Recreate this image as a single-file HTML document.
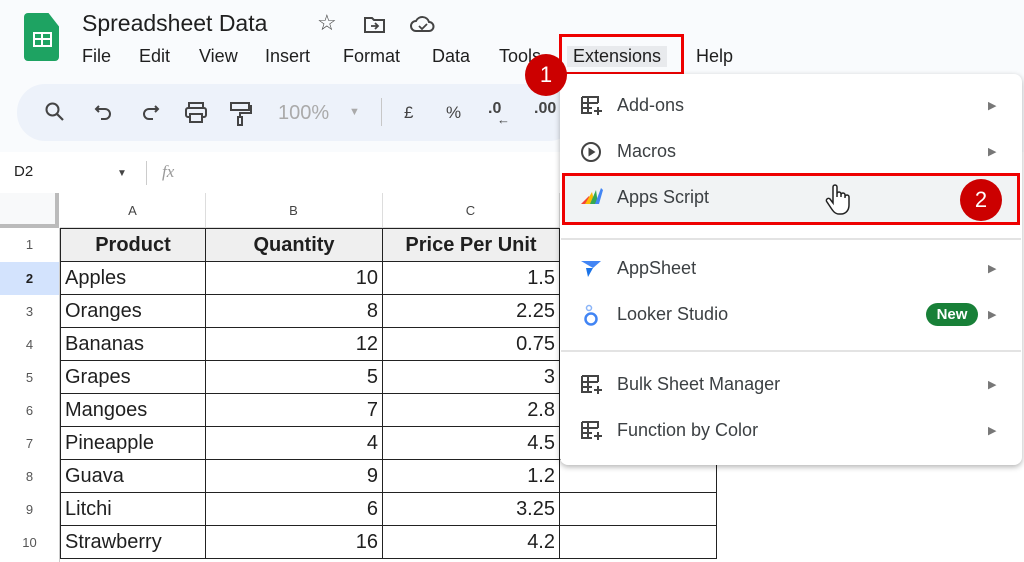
<!DOCTYPE html>
<html><head><style>
*{margin:0;padding:0;box-sizing:border-box}
body{width:1024px;height:562px;overflow:hidden;background:#f9fbfd;font-family:"Liberation Sans",Arial,sans-serif;position:relative;color:#1f1f1f}
.a{position:absolute}
td{border:1px solid #222;font-size:20px;height:33px;padding:0 4px;white-space:nowrap}
.rh{position:absolute;left:0;width:59px;text-align:center;font-size:13px;color:#555}
.it{position:absolute;left:617px;font-size:18px;color:#3c4043}
.ar{position:absolute;left:988px;font-size:11px;color:#777}
.ic{position:absolute;left:580px}
</style></head><body>
<div class="a" style="left:24px;top:13px;width:35px;height:48px;background:#1ea362;border-radius:4px;clip-path:polygon(0 0,70% 0,100% 28%,100% 100%,0 100%)"></div>
<div class="a" style="left:33px;top:32px;width:19px;height:15px;border:2px solid #fff;background:#1ea362"></div>
<div class="a" style="left:33px;top:38px;width:19px;height:2px;background:#fff"></div>
<div class="a" style="left:41px;top:32px;width:2px;height:15px;background:#fff"></div>
<div class="a" style="left:82px;top:10px;font-size:23px;color:#1f1f1f">Spreadsheet Data</div>
<div class="a" style="left:317px;top:10px;font-size:22px;color:#444">☆</div>
<svg class="a" style="left:363px;top:15px" width="24" height="20"><path d="M2 3h7l2 2h10v12H2z" fill="none" stroke="#444" stroke-width="2"/><path d="M8 11h7M12 8l3 3-3 3" fill="none" stroke="#444" stroke-width="1.8"/></svg>
<svg class="a" style="left:409px;top:14px" width="28" height="20"><path d="M7 17a5 5 0 0 1 0-10 7 7 0 0 1 13 1 4.5 4.5 0 0 1 0 9z" fill="none" stroke="#444" stroke-width="2"/><path d="M10 12l3 3 5-5" fill="none" stroke="#444" stroke-width="1.8"/></svg>
<div class="a" style="left:82px;top:46px;font-size:18px;color:#1f1f1f">
<span style="position:absolute;left:0">File</span><span style="position:absolute;left:57px">Edit</span><span style="position:absolute;left:117px">View</span><span style="position:absolute;left:183px">Insert</span><span style="position:absolute;left:261px">Format</span><span style="position:absolute;left:350px">Data</span><span style="position:absolute;left:417px">Tools</span><span style="position:absolute;left:485px;background:#e8eaed;padding:0 6px">Extensions</span><span style="position:absolute;left:614px">Help</span></div>
<div class="a" style="left:559px;top:34px;width:125px;height:41px;border:3px solid #e00;"></div>
<div class="a" style="left:17px;top:84px;width:560px;height:57px;background:#edf2fa;border-radius:28px"></div>
<svg class="a" style="left:44px;top:101px" width="22" height="22"><circle cx="8.5" cy="8.5" r="6" fill="none" stroke="#444" stroke-width="2"/><path d="M13 13l6 6" stroke="#444" stroke-width="2.2"/></svg>
<svg class="a" style="left:94px;top:104px" width="20" height="18"><path d="M5 2L2 5l3 3M2 5h9a5 5 0 0 1 0 10H7" fill="none" stroke="#444" stroke-width="2"/></svg>
<svg class="a" style="left:140px;top:104px" width="20" height="18"><path d="M15 2l3 3-3 3M18 5H9a5 5 0 0 0 0 10h4" fill="none" stroke="#444" stroke-width="2"/></svg>
<svg class="a" style="left:184px;top:102px" width="24" height="22"><rect x="5" y="1" width="14" height="5" fill="none" stroke="#444" stroke-width="2"/><rect x="2" y="6" width="20" height="9" rx="2" fill="none" stroke="#444" stroke-width="2"/><rect x="6" y="12" width="12" height="8" fill="#edf2fa" stroke="#444" stroke-width="2"/></svg>
<svg class="a" style="left:229px;top:101px" width="24" height="26"><rect x="2" y="2" width="18" height="7" fill="none" stroke="#444" stroke-width="2"/><path d="M20 5h2v7H11v4" fill="none" stroke="#444" stroke-width="2"/><rect x="9" y="16" width="4" height="8" fill="none" stroke="#444" stroke-width="2"/></svg>
<div class="a" style="left:278px;top:102px;font-size:20px;color:#aaa">100%</div>
<div class="a" style="left:349px;top:106px;font-size:11px;color:#aaa">▼</div>
<div class="a" style="left:381px;top:98px;width:1px;height:28px;background:#c7c7c7"></div>
<div class="a" style="left:404px;top:103px;font-size:17px;color:#444">£</div>
<div class="a" style="left:446px;top:103px;font-size:17px;color:#444">%</div>
<div class="a" style="left:488px;top:100px;font-size:16px;color:#444;font-weight:bold">.0</div>
<div class="a" style="left:497px;top:112px;font-size:13px;color:#444">←</div>
<div class="a" style="left:534px;top:100px;font-size:16px;color:#444;font-weight:bold">.00</div>
<div class="a" style="left:0;top:152px;width:1024px;height:41px;background:#fff"></div>
<div class="a" style="left:14px;top:163px;font-size:15px">D2</div>
<div class="a" style="left:117px;top:168px;font-size:10px;color:#444">▼</div>
<div class="a" style="left:146px;top:161px;width:1px;height:24px;background:#ccc"></div>
<div class="a" style="left:162px;top:162px;font-size:17px;font-style:italic;font-family:'Liberation Serif',serif;color:#999">fx</div>
<div class="a" style="left:0;top:193px;width:1024px;height:369px;background:#fff"></div>
<div class="a" style="left:0;top:193px;width:59px;height:35px;background:#f8f9fa;border-right:4px solid #bbb;border-bottom:4px solid #bbb"></div>
<div class="a" style="left:60px;top:193px;width:660px;height:35px;border-bottom:1px solid #ddd"></div>
<div class="a" style="left:60px;top:203px;width:145px;text-align:center;font-size:13px;color:#444">A</div>
<div class="a" style="left:205px;top:193px;width:1px;height:35px;background:#ddd"></div>
<div class="a" style="left:205px;top:203px;width:177px;text-align:center;font-size:13px;color:#444">B</div>
<div class="a" style="left:382px;top:193px;width:1px;height:35px;background:#ddd"></div>
<div class="a" style="left:382px;top:203px;width:177px;text-align:center;font-size:13px;color:#444">C</div>
<div class="a" style="left:559px;top:193px;width:1px;height:35px;background:#ddd"></div>
<div class="a" style="left:59px;top:228px;width:1px;height:334px;background:#ccc"></div>
<div class="rh" style="top:237px">1</div>
<div class="a" style="left:0;top:262px;width:59px;height:33px;background:#d3e3fd"></div>
<div class="rh" style="top:271px;font-weight:bold;color:#1f1f1f">2</div>
<div class="rh" style="top:304px">3</div><div class="rh" style="top:337px">4</div><div class="rh" style="top:370px">5</div><div class="rh" style="top:403px">6</div><div class="rh" style="top:436px">7</div><div class="rh" style="top:469px">8</div><div class="rh" style="top:502px">9</div><div class="rh" style="top:535px">10</div>
<table class="a" style="left:60px;top:228px;border-collapse:collapse">
<tr style="background:#efefef"><td style="width:145px;text-align:center;font-weight:bold">Product</td><td style="width:177px;text-align:center;font-weight:bold">Quantity</td><td style="width:177px;text-align:center;font-weight:bold">Price Per Unit</td><td style="width:157px"></td></tr>
<tr><td>Apples</td><td align="right">10</td><td align="right">1.5</td><td></td></tr>
<tr><td>Oranges</td><td align="right">8</td><td align="right">2.25</td><td></td></tr>
<tr><td>Bananas</td><td align="right">12</td><td align="right">0.75</td><td></td></tr>
<tr><td>Grapes</td><td align="right">5</td><td align="right">3</td><td></td></tr>
<tr><td>Mangoes</td><td align="right">7</td><td align="right">2.8</td><td></td></tr>
<tr><td>Pineapple</td><td align="right">4</td><td align="right">4.5</td><td></td></tr>
<tr><td>Guava</td><td align="right">9</td><td align="right">1.2</td><td></td></tr>
<tr><td>Litchi</td><td align="right">6</td><td align="right">3.25</td><td></td></tr>
<tr><td>Strawberry</td><td align="right">16</td><td align="right">4.2</td><td></td></tr>
</table>
<div class="a" style="left:560px;top:74px;width:462px;height:391px;background:#fff;border-radius:8px;box-shadow:0 2px 6px rgba(0,0,0,.3)"></div>
<div class="a" style="left:562px;top:175px;width:456px;height:48px;background:#f1f3f4"></div>
<div class="a" style="left:562px;top:173px;width:458px;height:52px;border:3px solid #e00"></div>
<div class="a" style="left:561px;top:238px;width:460px;height:2px;background:#e3e3e3"></div>
<div class="a" style="left:561px;top:350px;width:460px;height:2px;background:#e3e3e3"></div>
<svg class="ic" style="top:95px" width="24" height="22"><path d="M2 2h16v6M2 2v16h10M2 8h16M2 13h10M8 2v16" fill="none" stroke="#444" stroke-width="2"/><path d="M18 12v8M14 16h8" stroke="#444" stroke-width="2"/></svg>
<div class="it" style="top:95px">Add-ons</div><div class="ar" style="top:99px">▶</div>
<svg class="ic" style="top:141px" width="22" height="22"><circle cx="11" cy="11" r="9" fill="none" stroke="#444" stroke-width="2"/><path d="M8.5 6.5v9l7-4.5z" fill="#444"/></svg>
<div class="it" style="top:141px">Macros</div><div class="ar" style="top:145px">▶</div>
<svg class="ic" style="top:186px" width="24" height="22"><path d="M1 18l8-8 3 8z" fill="#f44336"/><path d="M5 18l7-12 3 12z" fill="#fbbc04"/><path d="M10 18l6-14 2 14z" fill="#34a853"/><path d="M15 18l6-16 2 2-4 14z" fill="#4285f4"/></svg>
<div class="it" style="top:187px">Apps Script</div>
<svg class="a" style="left:825px;top:183px" width="26" height="34"><path d="M8 20V4a2 2 0 0 1 4 0v10V11a2 2 0 0 1 4 0v3-2a2 2 0 0 1 4 0v3-1a2 2 0 0 1 4 0v8c0 5-3 9-8 9h-2c-4 0-6-3-8-6l-4-6a2 2 0 0 1 3-3z" fill="#fff" stroke="#222" stroke-width="1.5"/></svg>
<div class="a" style="left:960px;top:179px;width:42px;height:42px;border-radius:50%;background:#c00;color:#fff;font-size:22px;text-align:center;line-height:42px">2</div>
<svg class="ic" style="top:259px" width="22" height="20"><path d="M1 2h20l-8 7z" fill="#4285f4"/><path d="M13 9l-5 9-2-9z" fill="#1a73e8"/></svg>
<div class="it" style="top:258px">AppSheet</div><div class="ar" style="top:262px">▶</div>
<svg class="ic" style="top:303px" width="22" height="24"><circle cx="11" cy="16" r="5.5" fill="none" stroke="#4285f4" stroke-width="2.5"/><circle cx="9" cy="5" r="2.5" fill="none" stroke="#8ab4f8" stroke-width="1.5"/></svg>
<div class="it" style="top:304px">Looker Studio</div>
<div class="a" style="left:926px;top:303px;width:52px;height:23px;border-radius:12px;background:#188038;color:#fff;font-weight:bold;font-size:15px;text-align:center;line-height:23px">New</div>
<div class="ar" style="top:308px">▶</div>
<svg class="ic" style="top:374px" width="24" height="22"><path d="M2 2h16v6M2 2v16h10M2 8h16M2 13h10M8 2v16" fill="none" stroke="#444" stroke-width="2"/><path d="M18 12v8M14 16h8" stroke="#444" stroke-width="2"/></svg>
<div class="it" style="top:374px">Bulk Sheet Manager</div><div class="ar" style="top:378px">▶</div>
<svg class="ic" style="top:420px" width="24" height="22"><path d="M2 2h16v6M2 2v16h10M2 8h16M2 13h10M8 2v16" fill="none" stroke="#444" stroke-width="2"/><path d="M18 12v8M14 16h8" stroke="#444" stroke-width="2"/></svg>
<div class="it" style="top:420px">Function by Color</div><div class="ar" style="top:424px">▶</div>
<div class="a" style="left:525px;top:54px;width:42px;height:42px;border-radius:50%;background:#c00;color:#fff;font-size:22px;text-align:center;line-height:42px">1</div>
</body></html>
